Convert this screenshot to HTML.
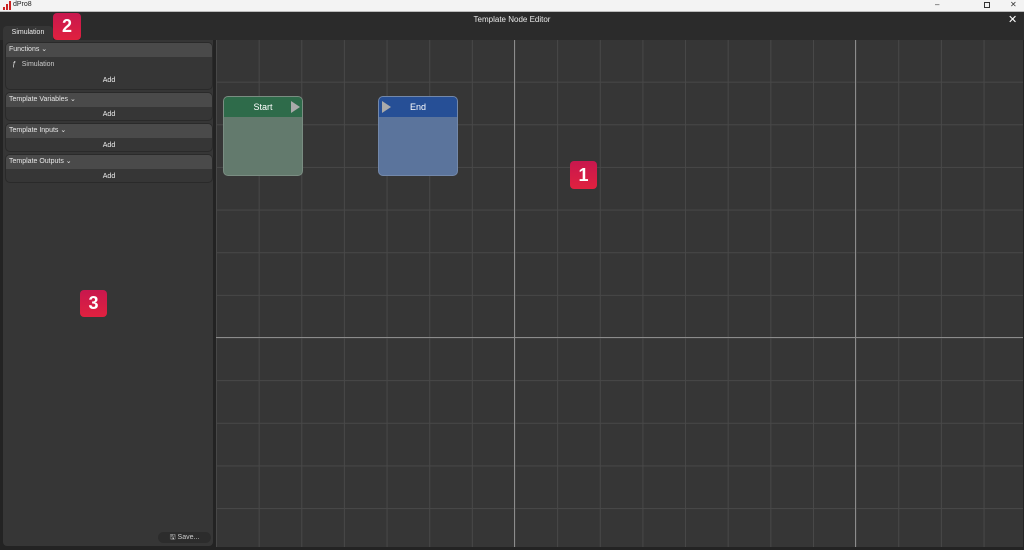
<!DOCTYPE html>
<html><head><meta charset="utf-8"><style>
*{margin:0;padding:0;box-sizing:border-box}
body{width:1024px;height:550px;overflow:hidden;background:#232323;font-family:"Liberation Sans",sans-serif;position:relative;color:#ddd}
.abs{position:absolute}
#top{left:0;top:0;width:1024px;height:12px;background:#f3f3f3;border-bottom:1px solid #bbb}
#hdr{left:0;top:12px;width:1024px;height:28px;background:#2b2b2b}
.badge{position:absolute;background:linear-gradient(#c8174e,#e0213f);color:#fff;font-weight:bold;font-size:18px;border-radius:4px;display:flex;align-items:center;justify-content:center}
#canvas{left:216px;top:40px;width:807px;height:507px;background-color:#363636;
background-image:
linear-gradient(90deg,#8c8c8c 1px,transparent 1px),
linear-gradient(0deg,#8c8c8c 1px,transparent 1px),
linear-gradient(90deg,#484848 1px,transparent 1px),
linear-gradient(0deg,#484848 1px,transparent 1px);
background-size:341px 341px,341px 341px,42.65px 42.65px,42.65px 42.65px;
background-position:298px 0,0 298px,0 0,0 0}
#panel{left:3px;top:40px;width:210px;height:506px;background:#363636;border-radius:0 0 4px 4px}
.sec{position:absolute;left:2px;width:208px;border:1px solid #2a2a2a;border-radius:5px;background:#363636;overflow:hidden}
.sh{height:14px;background:#4a4a4a;font-size:7px;line-height:14px;padding-left:3px;color:#e6e6e6}
.add{font-size:7px;text-align:center;color:#eee;height:16px;line-height:16px}
.node{position:absolute;width:80px;height:80px;border-radius:5px;overflow:hidden;border:1px solid rgba(255,255,255,0.15)}
.nh{height:20px;font-size:9px;color:#fff;text-align:center;line-height:20px;position:relative}
.tri{position:absolute;top:4px;width:0;height:0;border-top:6px solid transparent;border-bottom:6px solid transparent;border-left:9px solid #aaa}
</style></head><body>
<div id="top" class="abs">
 <svg class="abs" style="left:3px;top:1px" width="9" height="9" viewBox="0 0 9 9"><rect x="0" y="6" width="2" height="3" fill="#c22"/><rect x="3" y="3" width="2" height="6" fill="#c22"/><rect x="6" y="0" width="2" height="9" fill="#c22"/></svg>
 <div class="abs" style="left:13px;top:1px;font-size:7px;color:#222">dPro8</div>
 <div class="abs" style="left:935px;top:0;font-size:8px;color:#333">–</div>
 <div class="abs" style="left:984px;top:2px;width:6px;height:6px;border:1px solid #333"></div>
 <div class="abs" style="left:1010px;top:0;font-size:8px;color:#333">✕</div>
</div>
<div id="hdr" class="abs">
 <div class="abs" style="left:0;width:1024px;top:3px;text-align:center;font-size:8px;color:#e8e8e8">Template Node Editor</div>
 <div class="abs" style="left:1008px;top:1px;font-size:11px;color:#fff">✕</div>
 <div class="abs" style="left:3px;top:14px;width:50px;height:14px;background:#363636;border-radius:4px 4px 0 0;font-size:7px;text-align:center;line-height:14px;color:#eee">Simulation</div>
</div>
<div id="panel" class="abs">
 <div class="sec" style="top:2px;height:48px"><div class="sh">Functions &#8964;</div>
  <div style="font-size:7px;height:16px;line-height:16px;padding-left:6px;color:#ccc"><i style="color:#eee">ƒ</i>&nbsp;&nbsp;&nbsp;Simulation</div><div class="add">Add</div></div>
 <div class="sec" style="top:52px;height:29px"><div class="sh">Template Variables &#8964;</div><div class="add">Add</div></div>
 <div class="sec" style="top:83px;height:29px"><div class="sh">Template Inputs &#8964;</div><div class="add">Add</div></div>
 <div class="sec" style="top:114px;height:29px"><div class="sh">Template Outputs &#8964;</div><div class="add">Add</div></div>
 <div class="abs" style="left:155px;top:492px;width:53px;height:11px;background:#2c2c2c;border-radius:6px;font-size:7px;line-height:11px;text-align:center;color:#ccc">🖫 Save...</div>
</div>
<div id="canvas" class="abs"></div>
<div class="node" style="left:223px;top:96px;background:#637a6d"><div class="nh" style="background:#2e6b4a">Start<div class="tri" style="right:2px"></div></div></div>
<div class="node" style="left:378px;top:96px;background:#5b749c"><div class="nh" style="background:#264f96"><div class="tri" style="left:3px"></div>End</div></div>
<div class="badge" style="left:53px;top:13px;width:28px;height:27px">2</div>
<div class="badge" style="left:570px;top:161px;width:27px;height:28px">1</div>
<div class="badge" style="left:80px;top:290px;width:27px;height:27px">3</div>
</body></html>
